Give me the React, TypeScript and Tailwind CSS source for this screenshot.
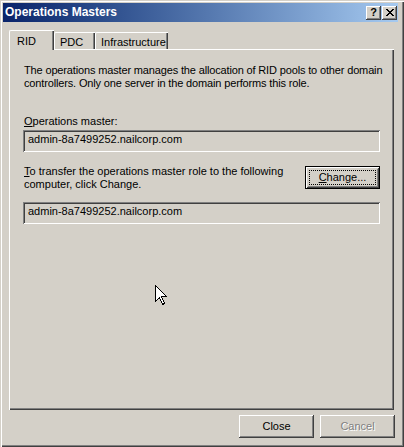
import React from 'react'

// Windows classic 3D edges, reused by buttons, fields and the tab page.
const RAISED =
  'shadow-[inset_-1px_-1px_#404040,inset_1px_1px_#ffffff,inset_-2px_-2px_#808080,inset_2px_2px_#d4d0c8]'
const SUNKEN =
  'shadow-[inset_1px_1px_#808080,inset_-1px_-1px_#ffffff,inset_2px_2px_#404040,inset_-2px_-2px_#d4d0c8]'

function CaptionButton({ children }: { children: React.ReactNode }) {
  return (
    <div
      className={`flex h-[14px] w-[15px] items-center justify-center bg-[#d4d0c8] ${RAISED}`}
    >
      {children}
    </div>
  )
}

function Field({ value }: { value: string }) {
  return (
    <div className={`h-[22px] w-[357px] bg-[#d4d0c8] pl-[5px] pt-[3px] ${SUNKEN}`}>
      <span className="leading-[13px]">{value}</span>
    </div>
  )
}

function PushButton({
  label,
  disabled,
}: {
  label: string
  disabled?: boolean
}) {
  return (
    <div
      className={`flex h-[23px] w-[75px] items-center justify-center bg-[#d4d0c8] ${RAISED}`}
    >
      <span
        className={
          disabled
            ? 'text-[#808080] [text-shadow:1px_1px_0_#ffffff]'
            : 'text-black'
        }
      >
        {label}
      </span>
    </div>
  )
}

function Cursor() {
  return (
    <svg
      className="absolute left-[155px] top-[285px]"
      width="13"
      height="21"
      viewBox="0 0 13 21"
    >
      <path
        d="M0.5 0.5 L0.5 16.5 L4.5 12.5 L7.5 19.5 L9.5 18.5 L6.5 11.5 L11.5 11.5 Z"
        fill="#ffffff"
        stroke="#000000"
        strokeWidth="1"
        shapeRendering="crispEdges"
      />
    </svg>
  )
}

export default function App() {
  return (
    <div className="relative h-[447px] w-[404px] overflow-hidden bg-[#d4d0c8] pl-[3px] pr-[6px] pt-[3px] font-['Liberation_Sans',Arial,sans-serif] text-[11px] leading-[13px] text-black shadow-[inset_1px_1px_#d4d0c8,inset_2px_2px_#ffffff,inset_-1px_-1px_#404040,inset_-2px_-2px_#808080]">
      {/* Title bar */}
      <div className="flex h-[19px] items-center justify-between bg-gradient-to-r from-[#0a246a] to-[#a6caf0] pl-[2px]">
        <span className="text-[12px] font-bold text-white">Operations Masters</span>
        <div className="mr-[1px] flex gap-[1px]">
          <CaptionButton>
            <span className="text-[11px] font-bold leading-none">?</span>
          </CaptionButton>
          <CaptionButton>
            <svg width="8" height="7" viewBox="0 0 8 7" shapeRendering="crispEdges">
              <path d="M0 0h2v1H0zM6 0h2v1H6zM1 1h2v1H1zM5 1h2v1H5zM2 2h4v1H2zM3 3h2v1H3zM2 4h4v1H2zM1 5h2v1H1zM5 5h2v1H5zM0 6h2v1H0zM6 6h2v1H6z" fill="#000" />
            </svg>
          </CaptionButton>
        </div>
      </div>

      <div className="pl-[6px] pt-[8px]">
        {/* Tabs */}
        <div className="relative z-10 -mb-px flex h-[20px] items-end">
          <div className="h-[20px] w-[45px] rounded-tl-[2px] border-l border-t border-white bg-[#d4d0c8] pl-[7px] pt-[4px] shadow-[inset_-1px_0_#404040,inset_-2px_0_#808080]">
            RID
          </div>
          <div className="mb-px h-[17px] w-[41px] rounded-tl-[2px] border-l border-t border-white pl-[5px] pt-[3px] shadow-[inset_-1px_0_#404040,inset_-2px_0_#808080]">
            PDC
          </div>
          <div className="mb-px h-[17px] w-[73px] rounded-tl-[2px] border-l border-t border-white pl-[5px] pt-[3px] shadow-[inset_-1px_0_#404040,inset_-2px_0_#808080]">
            Infrastructure
          </div>
        </div>

        {/* Tab page */}
        <div className="h-[361px] w-[385px] pl-[15px] pt-[15px] shadow-[inset_1px_1px_#ffffff,inset_-1px_-1px_#404040,inset_-2px_-2px_#808080]">
          <p className="w-[368px] tracking-[-0.15px]">
            The operations master manages the allocation of RID pools to other domain
            controllers. Only one server in the domain performs this role.
          </p>

          <p className="mt-[25px]">
            <span className="underline">O</span>perations master:
          </p>
          <div className="mt-[2px] -ml-px">
            <Field value="admin-8a7499252.nailcorp.com" />
          </div>

          <div className="mt-[13px] flex w-[356px] items-start justify-between">
            <p className="w-[280px]">
              <span className="underline">T</span>o transfer the operations master role to the following
              computer, click Change.
            </p>
            <div className="relative mt-px flex h-[23px] w-[75px] items-center justify-center border border-black bg-[#d4d0c8] shadow-[inset_1px_1px_#ffffff,inset_-1px_-1px_#404040,inset_2px_2px_#d4d0c8,inset_-2px_-2px_#808080]">
              <span>
                <span className="underline">C</span>hange...
              </span>
              <div className="absolute inset-[3px] border border-dotted border-black" />
            </div>
          </div>

          <div className="mt-[11px] -ml-px">
            <Field value="admin-8a7499252.nailcorp.com" />
          </div>
        </div>

        {/* Dialog buttons */}
        <div className="mt-[5px] flex justify-end gap-[6px] pr-[3px]">
          <PushButton label="Close" />
          <PushButton label="Cancel" disabled />
        </div>
      </div>

      <Cursor />
    </div>
  )
}
